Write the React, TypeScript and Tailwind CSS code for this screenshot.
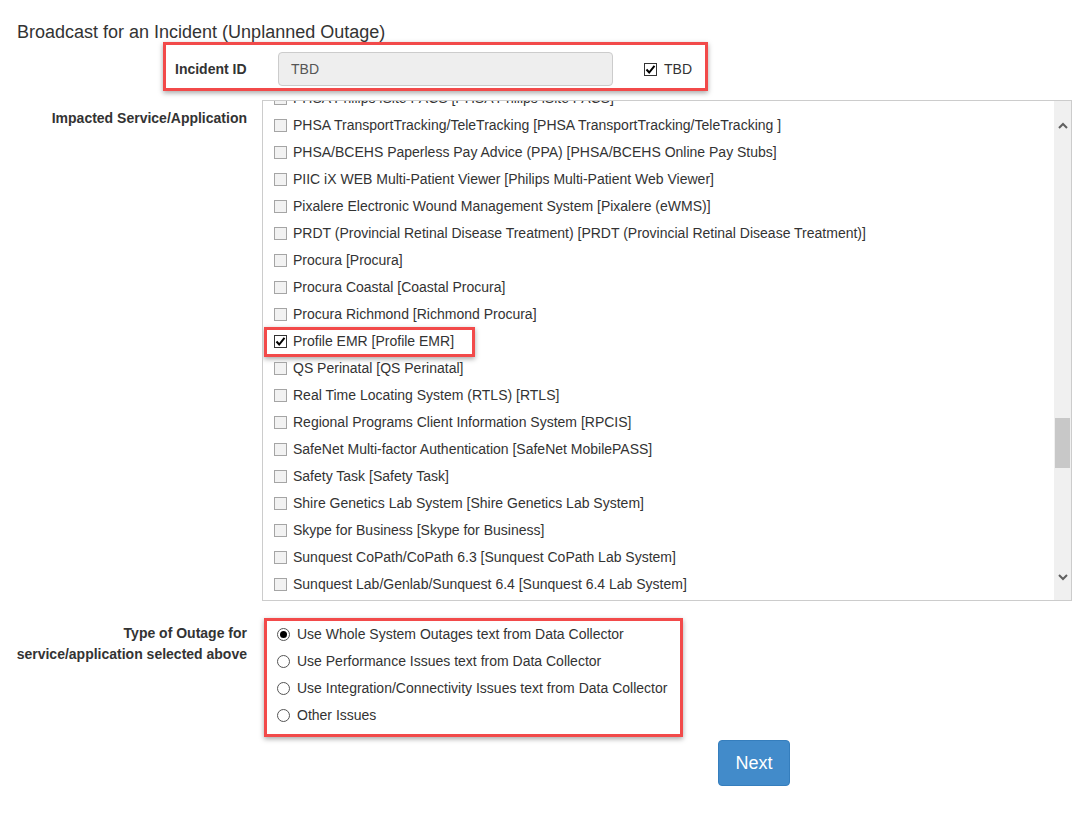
import React from 'react';

const services = [
  'PHSA Philips iSite PACS [PHSA Philips iSite PACS]',
  'PHSA TransportTracking/TeleTracking [PHSA TransportTracking/TeleTracking ]',
  'PHSA/BCEHS Paperless Pay Advice (PPA) [PHSA/BCEHS Online Pay Stubs]',
  'PIIC iX WEB Multi-Patient Viewer [Philips Multi-Patient Web Viewer]',
  'Pixalere Electronic Wound Management System [Pixalere (eWMS)]',
  'PRDT (Provincial Retinal Disease Treatment) [PRDT (Provincial Retinal Disease Treatment)]',
  'Procura [Procura]',
  'Procura Coastal [Coastal Procura]',
  'Procura Richmond [Richmond Procura]',
  'Profile EMR [Profile EMR]',
  'QS Perinatal [QS Perinatal]',
  'Real Time Locating System (RTLS) [RTLS]',
  'Regional Programs Client Information System [RPCIS]',
  'SafeNet Multi-factor Authentication [SafeNet MobilePASS]',
  'Safety Task [Safety Task]',
  'Shire Genetics Lab System [Shire Genetics Lab System]',
  'Skype for Business [Skype for Business]',
  'Sunquest CoPath/CoPath 6.3 [Sunquest CoPath Lab System]',
  'Sunquest Lab/Genlab/Sunquest 6.4 [Sunquest 6.4 Lab System]',
];

const outageTypes = [
  'Use Whole System Outages text from Data Collector',
  'Use Performance Issues text from Data Collector',
  'Use Integration/Connectivity Issues text from Data Collector',
  'Other Issues',
];

const CheckBox: React.FC<{ checked?: boolean }> = ({ checked }) =>
  checked ? (
    <span className="w-[13px] h-[13px] shrink-0 border border-[#333] bg-white flex items-center justify-center">
      <svg width="11" height="11" viewBox="0 0 11 11">
        <path d="M1.5 5.5 L4.2 8.5 L9.5 1.8" fill="none" stroke="#000" strokeWidth="2" />
      </svg>
    </span>
  ) : (
    <span className="w-[13px] h-[13px] shrink-0 border border-[#a5a5a5] bg-[#f2f2f2]" />
  );

const Radio: React.FC<{ checked?: boolean }> = ({ checked }) => (
  <span className="w-[13px] h-[13px] shrink-0 rounded-full border border-[#555] bg-white flex items-center justify-center">
    {checked && <span className="w-[7px] h-[7px] rounded-full bg-black" />}
  </span>
);

const mark = 'border-[3px] border-[#f24a4a] shadow-[0_2px_5px_rgba(0,0,0,0.35)]';

export default function App() {
  return (
    <div className="min-h-screen bg-white text-[#333] font-['Liberation_Sans',Arial,sans-serif] px-[17px] pt-[21px]">
      <h1 className="text-[18px] leading-[21px] pt-[1px] mb-[-1px] font-normal">Broadcast for an Incident (Unplanned Outage)</h1>

      {/* incident id */}
      <div className={`ml-[146px] w-[545px] h-[49px] pt-[5px] flex items-center ${mark}`}>
        <label className="ml-[9px] w-[103px] text-[14px] font-bold">Incident ID</label>
        <div className="w-[335px] h-[34px] rounded-[4px] border border-[#ccc] bg-[#eee] text-[#555] text-[14px] flex items-center px-[12px]">
          TBD
        </div>
        <div className="ml-[31px] flex items-center gap-[7px] text-[14px]">
          <CheckBox checked />
          TBD
        </div>
      </div>

      {/* services */}
      <div className="flex mt-[9px]">
        <div className="w-[230px] shrink-0 pt-[8px] text-right text-[14px] font-bold leading-[20px]">Impacted Service/Application</div>
        <div className="ml-[15px] w-[810px] h-[501px] shrink-0 border border-[#ccc] flex overflow-hidden">
          <div className="flex-1 overflow-hidden">
            <ul className="mt-[-16px] pl-[11px]">
              {services.map((s, i) => (
                <li key={s} className="h-[27px] flex items-center text-[14px] whitespace-nowrap">
                  {i === 9 ? (
                    <span className={`ml-[-10px] pl-[7px] w-[211px] h-[30px] flex items-center gap-[6px] ${mark}`}>
                      <CheckBox checked />
                      {s}
                    </span>
                  ) : (
                    <span className="flex items-center gap-[6px]">
                      <CheckBox />
                      {s}
                    </span>
                  )}
                </li>
              ))}
            </ul>
          </div>
          <div className="w-[17px] shrink-0 bg-[#f0f0f0] flex flex-col items-center">
            <svg className="mt-[21px] shrink-0" width="10" height="7" viewBox="0 0 10 7">
              <path d="M1 6 L5 2 L9 6" fill="none" stroke="#606060" strokeWidth="2" />
            </svg>
            <div className="mt-[289px] w-[15px] h-[50px] shrink-0 bg-[#c8c8c8]" />
            <svg className="mt-[106px] shrink-0" width="10" height="7" viewBox="0 0 10 7">
              <path d="M1 1 L5 5 L9 1" fill="none" stroke="#606060" strokeWidth="2" />
            </svg>
          </div>
        </div>
      </div>

      {/* outage type */}
      <div className="flex mt-[17px]">
        <div className="ml-[-6px] w-[236px] shrink-0 pt-[5px] text-right text-[14px] font-bold leading-[21px] whitespace-nowrap">
          Type of Outage for
          <br />
          service/application selected above
        </div>
        <div className={`ml-[17px] w-[419px] h-[119px] shrink-0 pl-[10px] pb-[5px] ${mark}`}>
          {outageTypes.map((t, i) => (
            <div key={t} className="h-[27px] flex items-center gap-[7px] text-[14px] whitespace-nowrap">
              <Radio checked={i === 0} />
              {t}
            </div>
          ))}
        </div>
      </div>

      <div className="ml-[701px] mt-[3px]">
        <button className="w-[72px] h-[46px] rounded-[4px] bg-[#428bca] border border-[#357ebd] text-white text-[18px]">
          Next
        </button>
      </div>
    </div>
  );
}
